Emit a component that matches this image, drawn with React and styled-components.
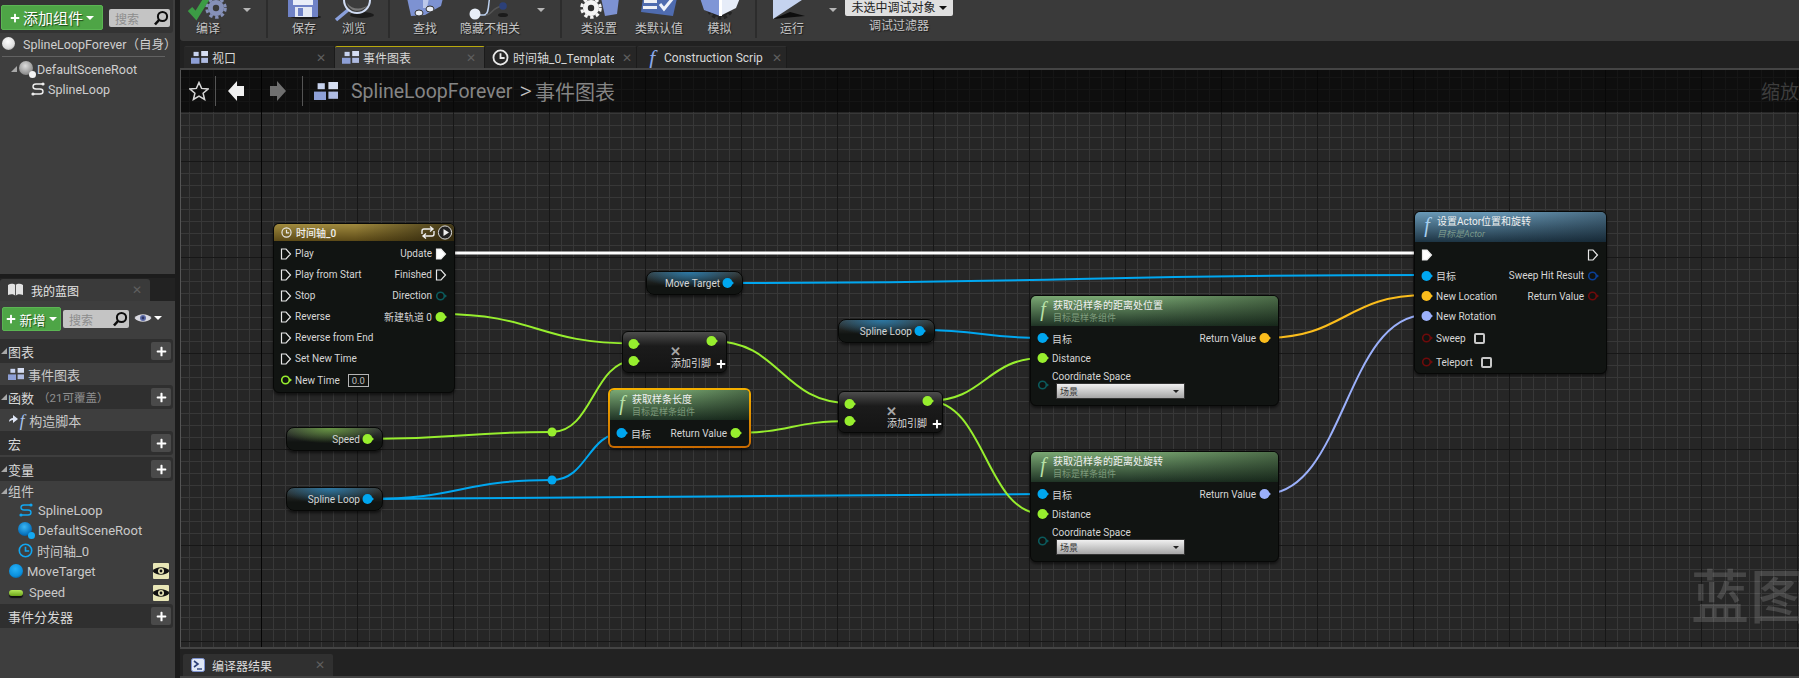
import React from 'react'
import styled, { createGlobalStyle } from 'styled-components'
import { FaPlus } from 'react-icons/fa'

const CANVAS_X = 181
const CANVAS_Y = 70

const GREEN = '#97ee2e'
const BLUE = '#00a7f0'
const YELLOW = '#fbbd1c'
const PURPLE = '#9bb0fb'
const TEAL = '#0b5a5c'
const RED = '#6e0b0b'
const NAVY = '#0a3f96'

const GlobalStyle = createGlobalStyle`
  html, body {
    margin: 0;
    padding: 0;
    background: #1c1c1c;
    overflow: hidden;
  }
  * {
    box-sizing: border-box;
  }
  body {
    font-family: Roboto, 'Noto Sans CJK SC', sans-serif;
  }
`

const Page = styled.div`
  width: 1799px;
  height: 678px;
  display: flex;
  overflow: hidden;
  background: #1c1c1c;
  color: #d0d0d0;
`

const LeftColumn = styled.div`
  width: 175px;
  flex: none;
  display: flex;
  flex-direction: column;
`

const RightColumn = styled.div`
  margin-left: 5px;
  flex: 1;
  min-width: 0;
  display: flex;
  flex-direction: column;
`

const Glyph = styled.svg`
  flex: none;
  display: block;
  margin-left: ${(p) => (p.$push ? 'auto' : '0')};
  transform: ${(p) => (p.$flip ? 'scaleX(-1)' : 'none')};
`

/* left side */

const ComponentsPanel = styled.div`
  height: 274px;
  background: #3e3e3e;
  margin-bottom: 4px;
`

const PanelHead = styled.div`
  height: 33px;
  background: #333;
  display: flex;
  align-items: flex-start;
  padding: 5px 0 0 1px;
  border-radius: 0 0 3px 0;
  margin-right: 2px;
`

const AddButton = styled.div`
  width: ${(p) => p.$w}px;
  height: ${(p) => p.$h}px;
  background: #4ea546;
  border: 1px solid #5bb553;
  border-radius: 2px;
  color: #fff;
  font-size: ${(p) => p.$size}px;
  display: flex;
  align-items: center;
  justify-content: center;
  gap: 3px;
  flex: none;
  text-shadow: 1px 1px 1px #1d4a19;
`

const Caret = styled.span`
  display: inline-block;
  width: 0;
  height: 0;
  border-left: ${(p) => p.$s || 4}px solid transparent;
  border-right: ${(p) => p.$s || 4}px solid transparent;
  border-top: ${(p) => p.$s || 4}px solid ${(p) => p.$c || '#fff'};
  flex: none;
`

const SearchBox = styled.div`
  height: 18px;
  width: ${(p) => p.$w}px;
  margin: ${(p) => p.$m};
  background: #c4c4c4;
  border-radius: 2px;
  color: #8d8d8d;
  font-size: 12px;
  display: flex;
  align-items: center;
  justify-content: space-between;
  padding: 0 1px 0 6px;
  flex: none;
`

const SelfRow = styled.div`
  height: 20px;
  margin: 0 10px 3px 2px;
  display: flex;
  align-items: center;
  gap: 8px;
  font-size: 12.5px;
  color: #cfcfcf;
  white-space: nowrap;
`

const Divider = styled.div`
  height: 1px;
  background: #626262;
  margin: 0 10px 2px 2px;
`

const TreeRow = styled.div`
  height: 20px;
  display: flex;
  align-items: center;
  padding-left: ${(p) => p.$indent}px;
  gap: ${(p) => p.$gap ?? 3}px;
  font-size: 12.5px;
  color: #cfcfcf;
  white-space: nowrap;
`

const Ball = styled.span`
  width: ${(p) => p.$d}px;
  height: ${(p) => p.$d}px;
  border-radius: 50%;
  flex: none;
  background: radial-gradient(circle at 45% 35%, ${(p) => p.$light} 0%, ${(p) => p.$mid} 60%, ${(p) => p.$dark} 100%);
`

const SmallBallWrap = styled.span`
  position: relative;
  width: 16px;
  height: 16px;
  flex: none;
  display: flex;
`

const BallBadge = styled.span`
  position: absolute;
  right: -1px;
  bottom: -1px;
  width: 7px;
  height: 7px;
  border-radius: 50%;
  background: ${(p) => p.$c};
`

const ExpandMark = styled.span`
  width: 0;
  height: 0;
  border-left: 6px solid transparent;
  border-bottom: 6px solid #a8a8a8;
  flex: none;
`

const BlueprintPanel = styled.div`
  flex: 1;
  display: flex;
  flex-direction: column;
`

const PanelTabStrip = styled.div`
  height: 23px;
  background: #222;
  flex: none;
  padding-top: 1px;
`

const PanelTab = styled.div`
  width: 150px;
  height: 22px;
  background: #3a3a3a;
  border-radius: 3px 3px 0 0;
  display: flex;
  align-items: center;
  padding-left: 7px;
  font-size: 12px;
  color: #e4e4e4;
  gap: 7px;
`

const CloseMark = styled.span`
  margin-left: auto;
  margin-right: ${(p) => p.$r || 8}px;
  color: #5f5f5f;
  font-size: 12px;
  line-height: 1;
`

const BlueprintBody = styled.div`
  flex: 1;
  background: #3e3e3e;
  padding-right: 2px;
`

const BlueprintTools = styled.div`
  height: 38px;
  padding: 6px 0 0 2px;
  display: flex;
  align-items: flex-start;
`

const EyeMenu = styled.div`
  display: flex;
  align-items: center;
  gap: 2px;
  margin: 6px 0 0 5px;
`

const Section = styled.div`
  height: 24px;
  background: #2f2f2f;
  border-radius: 0 3px 3px 0;
  margin-top: ${(p) => p.$mt || 0}px;
  display: flex;
  align-items: center;
  font-size: 13px;
  color: #d8d8d8;
  padding-left: ${(p) => (p.$flat ? 8 : 1)}px;
  gap: 1px;
`

const SectionNote = styled.span`
  color: #8f8f8f;
  font-size: 11.5px;
  margin-left: 3px;
  white-space: nowrap;
`

const PlusButton = styled.span`
  margin-left: auto;
  margin-right: 2px;
  width: 20px;
  height: 18px;
  background: #4a4a4a;
  border-radius: 2px;
  display: flex;
  align-items: center;
  justify-content: center;
  color: #fff;
  font-size: 11px;
`

const BlueprintRow = styled.div`
  height: ${(p) => p.$h || 22}px;
  display: flex;
  align-items: center;
  padding-left: ${(p) => p.$indent ?? 8}px;
  gap: ${(p) => p.$gap ?? 3}px;
  font-size: 13px;
  color: #c9c9c9;
  white-space: nowrap;
`

const EyeChip = styled.span`
  margin-left: auto;
  margin-right: 4px;
  width: 16px;
  height: 16px;
  background: #e8e6b6;
  border-radius: 1px;
  display: flex;
  align-items: center;
  justify-content: center;
`

const VarBar = styled.span`
  width: 14px;
  height: 6px;
  border-radius: 3px;
  background: linear-gradient(#b4e85a, #6da51a);
  box-shadow: 0 2px 1px #111;
  flex: none;
  margin-right: 1px;
`

/* toolbar */

const Toolbar = styled.div`
  height: 41px;
  flex: none;
  background: #3a3a3a;
  display: flex;
  border-radius: 0 0 0 3px;
`

const ToolGroup = styled.div`
  width: ${(p) => p.$w}px;
  padding-left: ${(p) => p.$pad || 0}px;
  display: flex;
  flex: none;
  height: 38px;
  border-right: ${(p) => (p.$end ? 'none' : '2px solid #2c2c2c')};
`

const ToolButton = styled.div`
  width: ${(p) => p.$w}px;
  flex: none;
  display: flex;
  flex-direction: column;
  align-items: center;
`

const ToolIconBox = styled.svg`
  width: 44px;
  height: 22px;
  flex: none;
  display: block;
`

const ToolLabel = styled.div`
  font-size: 12px;
  line-height: 14px;
  color: #c6c6c6;
  white-space: nowrap;
  text-shadow: 1px 1px 1px #1c1c1c;
`

const ToolArrow = styled.div`
  width: 22px;
  flex: none;
  display: flex;
  justify-content: center;
  padding-top: 8px;
`

const DebugColumn = styled.div`
  width: 108px;
  flex: none;
  margin-left: 1px;
  display: flex;
  flex-direction: column;
  align-items: center;
`

const DebugCombo = styled.div`
  width: 108px;
  height: 16px;
  background: #dfdfdf;
  border-radius: 0 0 2px 2px;
  color: #222;
  font-size: 12px;
  line-height: 14px;
  display: flex;
  align-items: center;
  justify-content: center;
  gap: 3px;
  margin-bottom: 3px;
`

/* tabs */

const TabStrip = styled.div`
  height: 29px;
  flex: none;
  padding: 5px 0 0 4px;
  display: flex;
  background: #212121;
  border-bottom: 2px solid #444;
`

const Tab = styled.div`
  width: ${(p) => p.$w}px;
  height: 22px;
  flex: none;
  display: flex;
  align-items: center;
  gap: 4px;
  padding-left: 7px;
  font-size: 12px;
  color: #d8d8d8;
  white-space: nowrap;
  overflow: hidden;
  background: ${(p) => (p.$active ? '#3a3a3a' : '#262626')};
  border-top: 1px solid ${(p) => (p.$active ? '#b8a80e' : '#2f2f2f')};
  border-right: 1px solid #1b1b1b;
  border-radius: 2px 2px 0 0;
`

const TabText = styled.span`
  overflow: hidden;
  width: ${(p) => p.$w}px;
  flex: none;
`

const FnGlyph = styled.span`
  font-family: 'Liberation Serif', serif;
  font-style: italic;
  font-size: ${(p) => p.$size || 18}px;
  line-height: 1;
  color: ${(p) => p.$c};
  flex: none;
  width: ${(p) => p.$w || 14}px;
  text-align: center;
`

/* graph */

const Canvas = styled.div`
  flex: 1;
  min-height: 0;
  position: relative;
  overflow: hidden;
  border-left: 1px solid #555;
  background-color: #262626;
  background-image:
    linear-gradient(#050505, #050505),
    linear-gradient(90deg, #171717 1px, transparent 1px),
    linear-gradient(#171717 1px, transparent 1px),
    linear-gradient(90deg, #383838 1px, transparent 1px),
    linear-gradient(#383838 1px, transparent 1px);
  background-size: 1px 100%, 96px 96px, 96px 96px, 12px 12px, 12px 12px;
  background-position: 80px 0, 80px 91px, 80px 91px, 8px 7px, 8px 7px;
  background-repeat: no-repeat, repeat, repeat, repeat, repeat;
`

const TitleBar = styled.div`
  position: absolute;
  left: 0;
  right: 0;
  top: 0;
  height: 42px;
  background: rgba(0, 0, 0, 0.62);
  display: flex;
  align-items: center;
  padding-left: 8px;
  z-index: 3;
`

const TitleRule = styled.span`
  width: 1px;
  height: 30px;
  background: #555;
  margin: ${(p) => p.$m};
  flex: none;
`

const NavSlot = styled.span`
  display: flex;
  margin-right: ${(p) => p.$mr}px;
  flex: none;
`

const TitleText = styled.span`
  font-size: ${(p) => p.$size}px;
  margin-left: ${(p) => p.$ml || 0}px;
  color: #858585;
  white-space: nowrap;
`

const TitleChevron = styled.span`
  font-size: 24px;
  font-weight: 300;
  line-height: 24px;
  color: #c4c4c4;
  margin: 0 3px 0 7px;
`

const ZoomText = styled.span`
  position: absolute;
  left: 1580px;
  top: 7px;
  font-size: 19px;
  color: #3d3d3d;
  white-space: nowrap;
`

const Watermark = styled.div`
  position: absolute;
  left: ${1691 - CANVAS_X}px;
  top: ${556 - CANVAS_Y}px;
  font-size: 58px;
  line-height: 84px;
  font-weight: 500;
  color: rgba(255, 255, 255, 0.15);
  white-space: nowrap;
  letter-spacing: 1px;
`

const WireLayer = styled.svg`
  position: absolute;
  left: 0;
  top: 0;
  width: 1618px;
  height: 577px;
  z-index: 1;
`

const Node = styled.div`
  position: absolute;
  z-index: 2;
  left: ${(p) => p.$x - CANVAS_X}px;
  top: ${(p) => p.$y - CANVAS_Y}px;
  width: ${(p) => p.$w}px;
  height: ${(p) => p.$h}px;
  background: #111412;
  border-radius: 6px;
  border: 1px solid #070807;
  box-shadow: 0 2px 3px rgba(0, 0, 0, 0.55);
  overflow: hidden;
  font-size: 10px;
  color: #d6d6d6;
`

const SelectedNode = styled(Node)`
  border: 2px solid transparent;
  background: linear-gradient(#111412, #111412) padding-box, linear-gradient(#f5b000, #c96a00) border-box;
`

const NodeHeader = styled.div`
  height: ${(p) => p.$h || 30}px;
  padding: 3px 0 0 7px;
  display: flex;
  gap: 5px;
  background: ${(p) =>
    p.$tone === 'blue'
      ? 'linear-gradient(90deg, transparent 40%, rgba(10,20,30,.35)), linear-gradient(#6a9ab8, #1d3443)'
      : 'linear-gradient(90deg, transparent 40%, rgba(10,20,10,.4)), linear-gradient(#7aa873, #1f3325)'};
`

const TitleColumn = styled.div`
  display: flex;
  flex-direction: column;
  min-width: 0;
`

const NodeTitle = styled.div`
  font-size: 10px;
  line-height: 13px;
  color: #f0f0f0;
  white-space: nowrap;
`

const NodeSubtitle = styled.div`
  font-size: 9px;
  line-height: 13px;
  color: rgba(170, 200, 165, 0.62);
  white-space: nowrap;
  font-style: ${(p) => (p.$italic ? 'italic' : 'normal')};
`

const TimelineHeader = styled.div`
  height: 17px;
  background: linear-gradient(90deg, transparent 45%, rgba(30, 25, 10, 0.7)), linear-gradient(#a08a3e, #5c4a17);
  display: flex;
  align-items: center;
  padding: 0 1px 0 7px;
  gap: 4px;
  font-size: 10px;
  font-weight: 500;
  color: #f0f0f0;
`

const NodeBody = styled.div`
  padding: ${(p) => p.$pad || '2px 0 0 0'};
`

const PinRow = styled.div`
  height: ${(p) => p.$h || 20}px;
  display: flex;
  align-items: center;
  justify-content: space-between;
  padding: 0 ${(p) => p.$pr ?? 7}px 0 ${(p) => p.$pl ?? 6}px;
  white-space: nowrap;
`

const PinCell = styled.span`
  display: flex;
  align-items: center;
  gap: ${(p) => p.$gap ?? 3}px;
`

const LiteralBox = styled.span`
  border: 1px solid #b5b5b5;
  padding: 0 3px;
  height: 13px;
  line-height: 11px;
  margin-left: 5px;
  font-size: 9.5px;
  color: #bbb;
`

const CheckBox = styled.span`
  width: 11px;
  height: 11px;
  border: 2px solid #c8c8c8;
  border-radius: 2px;
  margin-left: 5px;
`

const EnumRow = styled.div`
  display: flex;
  align-items: center;
  padding-left: 6px;
  gap: 3px;
  margin-top: 3px;
`

const EnumBlock = styled.div`
  display: flex;
  flex-direction: column;
`

const EnumLabel = styled.div`
  line-height: 12px;
`

const EnumCombo = styled.div`
  width: 129px;
  height: 16px;
  margin-left: 4px;
  background: linear-gradient(#f0f0f0, #a6a6a6);
  border: 1px solid #333;
  color: #333;
  font-size: 9px;
  display: flex;
  align-items: center;
  justify-content: space-between;
  padding: 0 5px 0 3px;
`

const VarPill = styled(Node)`
  border-radius: 8px;
  display: flex;
  align-items: center;
  justify-content: flex-end;
  gap: 2px;
  padding-right: 8px;
  background: ${(p) =>
    `radial-gradient(ellipse 55% 70% at 45% 0%, ${p.$glow}, transparent), linear-gradient(#3a3d3c, #111412 65%)`};
`

const AddNodeBox = styled(Node)`
  background: linear-gradient(#4d4d4d, #1b1b1b 35%, #141414);
  display: flex;
  font-size: 10px;
  overflow: visible;
`

const AddPins = styled.div`
  width: 24px;
  flex: none;
  display: flex;
  flex-direction: column;
  padding: 6px 0 0 5px;
  gap: 5px;
`

const AddMiddle = styled.div`
  width: 57px;
  flex: none;
  padding-top: 13px;
  color: #c8c8c8;
`

const AddCross = styled.div`
  font-size: 13px;
  font-weight: bold;
  line-height: 13px;
  color: #a5a5a5;
  text-align: center;
`

const AddLabel = styled.div`
  display: flex;
  width: 60px;
  align-items: center;
  gap: 5px;
  white-space: nowrap;
  margin-left: 24px;
  line-height: 12px;
  color: #d8d8d8;

  svg {
    flex: none;
  }
`

const AddOut = styled.div`
  flex: none;
  padding: 3px 0 0 2px;
`

/* bottom */

const BottomStrip = styled.div`
  height: 31px;
  flex: none;
  background: #222;
  border-top: 2px solid #444;
  border-bottom: 2px solid #444;
  padding: 5px 0 0 3px;
`

const BottomTab = styled.div`
  width: 150px;
  height: 22px;
  background: #303030;
  border-radius: 2px 2px 0 0;
  display: flex;
  align-items: center;
  padding-left: 8px;
  gap: 7px;
  font-size: 12px;
  color: #dcdcdc;
`

/* drawings */

function Wire({ from, to, color, width = 2, bend }) {
  const dx = Math.abs(to[0] - from[0])
  const d = bend ?? dx * 0.5
  return (
    <path
      d={`M${from[0]} ${from[1]} C${from[0] + d} ${from[1]}, ${to[0] - d} ${to[1]}, ${to[0]} ${to[1]}`}
      fill="none"
      stroke={color}
      strokeWidth={width}
    />
  )
}

function Pin({ kind = 'data', color = '#fff' }) {
  if (kind === 'exec' || kind === 'execOn') {
    return (
      <Glyph width="12" height="12" viewBox="0 0 12 12">
        <path
          d="M1.5 1 H6 L10.5 6 L6 11 H1.5 Z"
          fill={kind === 'execOn' ? '#fff' : 'none'}
          stroke="#e8e8e8"
          strokeWidth="1.2"
        />
      </Glyph>
    )
  }
  return (
    <Glyph width="12" height="12" viewBox="0 0 12 12">
      <path d="M9.5 4 L12 6 L9.5 8 Z" fill={color} />
      <circle
        cx="5.5"
        cy="6"
        r={kind === 'hollow' ? 3.8 : 5}
        fill={kind === 'hollow' ? '#101210' : color}
        stroke={kind === 'hollow' ? color : 'none'}
        strokeWidth="1.6"
      />
    </Glyph>
  )
}

function GraphIcon({ size = 20 }) {
  return (
    <Glyph width={size} height={size * 0.75} viewBox="0 0 20 15">
      <rect x="0" y="8" width="10" height="7" fill="#8d9fd6" />
      <rect x="3" y="1" width="6" height="5" fill="#c7d2ee" />
      <rect x="12" y="0" width="8" height="6" fill="#d6def2" />
      <rect x="12" y="8" width="8" height="6" fill="#aebbe2" />
    </Glyph>
  )
}

function ClockIcon({ size = 14, color = '#e8e8e8' }) {
  return (
    <Glyph width={size} height={size} viewBox="0 0 14 14">
      <circle cx="7" cy="7" r="5.8" fill="none" stroke={color} strokeWidth="1.5" />
      <path d="M7 3.5 V7.4 H10.4" fill="none" stroke={color} strokeWidth="1.5" />
    </Glyph>
  )
}

function SplineIcon({ color = '#eee', size = 14 }) {
  return (
    <Glyph width={size} height={size} viewBox="0 0 14 14">
      <path d="M12 2 H5 C1 2 1 7 5 7 H9 C13 7 13 12 9 12 H2" fill="none" stroke={color} strokeWidth="1.4" />
      <circle cx="12" cy="2" r="1.6" fill={color} />
      <circle cx="2" cy="12" r="1.6" fill={color} />
    </Glyph>
  )
}

function SearchGlyph() {
  return (
    <Glyph width="16" height="16" viewBox="0 0 16 16">
      <circle cx="9.5" cy="6.5" r="4.6" fill="none" stroke="#0c0c0c" strokeWidth="2" />
      <path d="M6 10 L2 14.5" stroke="#0c0c0c" strokeWidth="2.6" />
    </Glyph>
  )
}

function EyeGlyph({ light }) {
  return (
    <Glyph width="18" height="10" viewBox="0 0 18 10">
      <path d="M0.5 5 C4 0 14 0 17.5 5 C14 10 4 10 0.5 5 Z" fill={light ? '#d8d8e0' : '#111'} />
      <circle cx="9" cy="5" r="3" fill={light ? '#5d6ba8' : '#e8e6b6'} />
      <circle cx="9" cy="5" r="1.4" fill={light ? '#2c3563' : '#111'} />
    </Glyph>
  )
}

function BookIcon() {
  return (
    <Glyph width="17" height="14" viewBox="0 0 17 14">
      <path d="M1 12 V2 C4 0 7 1 8.5 2 C10 1 13 0 16 2 V12 C13 11 10 11 8.5 13 C7 11 4 11 1 12 Z" fill="#e2e2e2" />
      <path d="M8.5 2 V13" stroke="#555" strokeWidth="1" />
    </Glyph>
  )
}

function ConstructArrow() {
  return (
    <Glyph width="10" height="12" viewBox="0 0 10 12">
      <path d="M1 8 C1 5 3 4 5 4 V1 L10 5 L5 9 V6 C3 6 2 7 1 8 Z" fill="#dfe6f6" />
    </Glyph>
  )
}

function GearShape({ cx, cy, r, fill, hole }) {
  return (
    <g>
      <circle cx={cx} cy={cy} r={r + 1.3} fill="none" stroke={fill} strokeWidth="3" strokeDasharray="3.4 2.6" />
      <circle cx={cx} cy={cy} r={r} fill={fill} />
      <circle cx={cx} cy={cy} r={r * 0.4} fill={hole} />
    </g>
  )
}

function CompileIcon() {
  return (
    <ToolIconBox viewBox="0 0 44 22">
      <GearShape cx={30} cy={8} r={8} fill="#8590b8" hole="#3a3a3a" />
      <path d="M4 9 L10 15.5 L21 -2" fill="none" stroke="#3c9c45" strokeWidth="6" />
    </ToolIconBox>
  )
}

function SaveIcon() {
  return (
    <ToolIconBox viewBox="0 0 44 22">
      <ellipse cx="24" cy="17" rx="15" ry="2" fill="#1b1b1b" />
      <path d="M6 -2 H36 V17 H6 Z" fill="#6f82c6" />
      <path d="M11 -2 H31 V5 H11 Z" fill="#e8edf8" />
      <path d="M13 7 H30 V17 H13 Z" fill="#e3e8f4" />
      <path d="M16 8 H21 V16 H16 Z" fill="#6f82c6" />
    </ToolIconBox>
  )
}

function BrowseIcon() {
  return (
    <ToolIconBox viewBox="0 0 44 22">
      <ellipse cx="30" cy="15" rx="12" ry="3" fill="#1b1b1b" />
      <path d="M16 10 L4 20" stroke="#8aa0dc" strokeWidth="3.5" />
      <circle cx="25" cy="0" r="13" fill="#3c3c3c" stroke="#d0dcf4" strokeWidth="2" />
      <path d="M15 3 C20 10 30 10 36 5 C30 13 18 13 15 3 Z" fill="#777" />
    </ToolIconBox>
  )
}

function FindIcon() {
  return (
    <ToolIconBox viewBox="0 0 44 22">
      <path d="M4 -2 H40 L38 6 L22 15 L8 16 Z" fill="#7d92d2" />
      <path d="M20 -2 H26 L24 8 H20 Z" fill="#bcc8ea" />
      <ellipse cx="16" cy="13" rx="4" ry="3" fill="#e8ecf5" stroke="#333" />
      <ellipse cx="27" cy="9" rx="4" ry="3" fill="#e8ecf5" stroke="#333" />
    </ToolIconBox>
  )
}

function HideIcon() {
  return (
    <ToolIconBox viewBox="0 0 44 22">
      <ellipse cx="35" cy="15" rx="5" ry="2" fill="#1b1b1b" />
      <path d="M11 15 H16 C22 15 20 0 22 -2" fill="none" stroke="#bcd0ee" strokeWidth="1.5" />
      <path d="M18 15 C24 15 24 7 35 6" fill="none" stroke="#555" strokeWidth="1.5" />
      <circle cx="7" cy="14" r="5.5" fill="#e8eef8" />
      <circle cx="35" cy="6" r="3.8" fill="#2c4078" />
    </ToolIconBox>
  )
}

function ClassIcon() {
  return (
    <ToolIconBox viewBox="0 0 44 22">
      <path d="M24 -2 H42 L40 14 L28 16 Z" fill="#7d92d2" />
      <GearShape cx={14} cy={8} r={8} fill="#f4f4f4" hole="#2d2d2d" />
    </ToolIconBox>
  )
}

function DefaultsIcon() {
  return (
    <ToolIconBox viewBox="0 0 44 22">
      <path d="M6 -2 H40 L36 16 L4 12 Z" fill="#4f6cb0" />
      <path d="M7 0 H20 V3 H7 Z M6 6 H20 V9 H6 Z" fill="#eef0f6" />
      <path d="M23 4 L27 9 L36 -2" fill="none" stroke="#eef2fa" strokeWidth="3" />
    </ToolIconBox>
  )
}

function SimulateIcon() {
  return (
    <ToolIconBox viewBox="0 0 44 22">
      <GearShape cx={22} cy={6} r={11} fill="#242424" hole="#242424" />
      <path d="M2 -2 H22 V16 L6 10 Z" fill="#7f96d6" />
      <path d="M22 -2 H42 L38 8 L22 16 Z" fill="#e6ecf8" />
      <path d="M21 -2 H24 V16 H21 Z" fill="#ffffff" />
    </ToolIconBox>
  )
}

function PlayIcon() {
  return (
    <ToolIconBox viewBox="0 0 44 22">
      <path d="M3 19 L20 12 L35 16 Z" fill="#0d0d0d" />
      <path d="M3 -2 H35 L3 19 Z" fill="#c5d3ef" />
    </ToolIconBox>
  )
}

function Star() {
  return (
    <Glyph width="20" height="20" viewBox="0 0 20 20">
      <path d="M10 1.5 L12.6 7.4 L19 8 L14.1 12.2 L15.6 18.5 L10 15.1 L4.4 18.5 L5.9 12.2 L1 8 L7.4 7.4 Z" fill="none" stroke="#d8d8d8" strokeWidth="1.5" />
    </Glyph>
  )
}

function NavArrow({ flip, color }) {
  return (
    <Glyph width="18" height="22" viewBox="0 0 18 22" $flip={flip}>
      <path d="M1 11 L10 1 V6 H17 V16 H10 V21 Z" fill={color} />
    </Glyph>
  )
}

function TimelineControls() {
  return (
    <Glyph width="33" height="15" viewBox="0 0 33 15" $push>
      <path d="M2 9 V6 Q2 4 4 4 H12 M10 1.5 L13 4 L10 6.5 M14 6 V9 Q14 11 12 11 H4 M6 8.5 L3 11 L6 13.5" fill="none" stroke="#eee" strokeWidth="1.4" />
      <circle cx="25" cy="7.5" r="6.6" fill="#222" stroke="#ddd" strokeWidth="1" />
      <path d="M23.5 4 L29 7.5 L23.5 11 Z" fill="#eee" />
    </Glyph>
  )
}

function CompilerIcon() {
  return (
    <Glyph width="14" height="14" viewBox="0 0 14 14">
      <rect x="0.5" y="0.5" width="13" height="13" rx="2" fill="#dfe7f5" stroke="#7d92d2" />
      <path d="M3 3 L7 6 L3 9" fill="none" stroke="#2c4078" strokeWidth="1.6" />
      <path d="M6 11 H11" stroke="#2c4078" strokeWidth="1.4" />
    </Glyph>
  )
}

function LeftPin({ kind, color, children }) {
  return (
    <PinCell>
      <Pin kind={kind} color={color} />
      {children}
    </PinCell>
  )
}

function RightPin({ kind, color, children }) {
  return (
    <PinCell>
      {children}
      <Pin kind={kind} color={color} />
    </PinCell>
  )
}

function FunctionHeader({ title, subtitle, tone, italic }) {
  return (
    <NodeHeader $tone={tone}>
      <FnGlyph $c={tone === 'blue' ? '#a8d0f0' : '#b8e0a8'} $size={20} $w={10}>
        f
      </FnGlyph>
      <TitleColumn>
        <NodeTitle>{title}</NodeTitle>
        <NodeSubtitle $italic={italic}>{subtitle}</NodeSubtitle>
      </TitleColumn>
    </NodeHeader>
  )
}

function SplineDistanceNode({ y, title, out }) {
  return (
    <Node $x={1030} $y={y} $w={249} $h={111}>
      <FunctionHeader title={title} subtitle="目标是样条组件" />
      <NodeBody>
        <PinRow $h={20}>
          <LeftPin color={BLUE}>目标</LeftPin>
          <RightPin color={out}>Return Value</RightPin>
        </PinRow>
        <PinRow $h={20}>
          <LeftPin color={GREEN}>Distance</LeftPin>
        </PinRow>
        <EnumRow>
          <Pin kind="hollow" color={TEAL} />
          <EnumBlock>
            <EnumLabel>Coordinate Space</EnumLabel>
            <EnumCombo>
              场景
              <Caret $s={3.5} $c="#222" />
            </EnumCombo>
          </EnumBlock>
        </EnumRow>
      </NodeBody>
    </Node>
  )
}

function AddNode({ x, y }) {
  return (
    <AddNodeBox $x={x} $y={y} $w={105} $h={42}>
      <AddPins>
        <Pin color={GREEN} />
        <Pin color={GREEN} />
      </AddPins>
      <AddMiddle>
        <AddCross>✕</AddCross>
        <AddLabel>
          添加引脚
          <FaPlus size={10} color="#fff" />
        </AddLabel>
      </AddMiddle>
      <AddOut>
        <Pin color={GREEN} />
      </AddOut>
    </AddNodeBox>
  )
}

const p = (x, y) => [x, y]

export default function App() {
  return (
    <Page>
      <GlobalStyle />
      <LeftColumn>
        <ComponentsPanel>
          <PanelHead>
            <AddButton $w={102} $h={25} $size={15}>
              <FaPlus size={10} />
              添加组件
              <Caret $s={4} />
            </AddButton>
            <SearchBox $w={61} $m="4px 0 0 6px">
              搜索
              <SearchGlyph />
            </SearchBox>
          </PanelHead>
          <SelfRow>
            <Ball $d={13} $light="#fff" $mid="#ddd" $dark="#777" />
            SplineLoopForever（自身）
          </SelfRow>
          <Divider />
          <TreeRow $indent={11} $gap={2}>
            <ExpandMark />
            <SmallBallWrap>
              <Ball $d={14} $light="#ddd" $mid="#999" $dark="#666" />
              <BallBadge $c="#f4f4f4" />
            </SmallBallWrap>
            DefaultSceneRoot
          </TreeRow>
          <TreeRow $indent={31}>
            <SplineIcon />
            SplineLoop
          </TreeRow>
        </ComponentsPanel>

        <BlueprintPanel>
          <PanelTabStrip>
            <PanelTab>
              <BookIcon />
              我的蓝图
              <CloseMark>✕</CloseMark>
            </PanelTab>
          </PanelTabStrip>
          <BlueprintBody>
            <BlueprintTools>
              <AddButton $w={59} $h={24} $size={13}>
                <FaPlus size={10} />
                新增
                <Caret $s={4} />
              </AddButton>
              <SearchBox $w={66} $m="3px 0 0 2px">
                搜索
                <SearchGlyph />
              </SearchBox>
              <EyeMenu>
                <EyeGlyph light />
                <Caret $s={4} />
              </EyeMenu>
            </BlueprintTools>
            <Section>
              <ExpandMark />
              图表
              <PlusButton><FaPlus /></PlusButton>
            </Section>
            <BlueprintRow $gap={4}>
              <GraphIcon size={16} />
              事件图表
            </BlueprintRow>
            <Section>
              <ExpandMark />
              函数
              <SectionNote>（21可覆盖）</SectionNote>
              <PlusButton><FaPlus /></PlusButton>
            </Section>
            <BlueprintRow $gap={0}>
              <ConstructArrow />
              <FnGlyph $c="#a8c4ee" $size={17} $w={8}>f</FnGlyph>
              &nbsp;构造脚本
            </BlueprintRow>
            <Section $flat>
              宏
              <PlusButton><FaPlus /></PlusButton>
            </Section>
            <Section $mt={2}>
              <ExpandMark />
              变量
              <PlusButton><FaPlus /></PlusButton>
            </Section>
            <BlueprintRow $h={19} $indent={1} $gap={1}>
              <ExpandMark />
              组件
            </BlueprintRow>
            <BlueprintRow $h={20} $indent={19} $gap={5}>
              <SplineIcon color="#12a6f0" />
              SplineLoop
            </BlueprintRow>
            <BlueprintRow $h={20} $indent={18} $gap={4}>
              <SmallBallWrap>
                <Ball $d={14} $light="#3bb6f4" $mid="#0a76c0" $dark="#053a6c" />
                <BallBadge $c="#14a8f2" />
              </SmallBallWrap>
              DefaultSceneRoot
            </BlueprintRow>
            <BlueprintRow $h={20} $indent={18} $gap={4}>
              <ClockIcon size={15} color="#12a6f0" />
              时间轴_0
            </BlueprintRow>
            <BlueprintRow $h={22} $indent={9} $gap={4}>
              <Ball $d={14} $light="#26b2f8" $mid="#0a8fdc" $dark="#053a6c" />
              MoveTarget
              <EyeChip><EyeGlyph /></EyeChip>
            </BlueprintRow>
            <BlueprintRow $h={21} $indent={9} $gap={5}>
              <VarBar />
              Speed
              <EyeChip><EyeGlyph /></EyeChip>
            </BlueprintRow>
            <Section $flat $mt={1}>
              事件分发器
              <PlusButton><FaPlus /></PlusButton>
            </Section>
          </BlueprintBody>
        </BlueprintPanel>
      </LeftColumn>

      <RightColumn>
        <Toolbar>
          <ToolGroup $w={88}>
            <ToolButton $w={56}>
              <CompileIcon />
              <ToolLabel>编译</ToolLabel>
            </ToolButton>
            <ToolArrow><Caret $s={4} $c="#b5b5b5" /></ToolArrow>
          </ToolGroup>
          <ToolGroup $w={122} $pad={11}>
            <ToolButton $w={50}>
              <SaveIcon />
              <ToolLabel>保存</ToolLabel>
            </ToolButton>
            <ToolButton $w={50}>
              <BrowseIcon />
              <ToolLabel>浏览</ToolLabel>
            </ToolButton>
          </ToolGroup>
          <ToolGroup $w={172} $pad={10}>
            <ToolButton $w={50}>
              <FindIcon />
              <ToolLabel>查找</ToolLabel>
            </ToolButton>
            <ToolButton $w={80}>
              <HideIcon />
              <ToolLabel>隐藏不相关</ToolLabel>
            </ToolButton>
            <ToolArrow><Caret $s={4} $c="#b5b5b5" /></ToolArrow>
          </ToolGroup>
          <ToolGroup $w={195} $pad={7}>
            <ToolButton $w={60}>
              <ClassIcon />
              <ToolLabel>类设置</ToolLabel>
            </ToolButton>
            <ToolButton $w={60}>
              <DefaultsIcon />
              <ToolLabel>类默认值</ToolLabel>
            </ToolButton>
            <ToolButton $w={61}>
              <SimulateIcon />
              <ToolLabel>模拟</ToolLabel>
            </ToolButton>
          </ToolGroup>
          <ToolGroup $w={260} $pad={5} $end>
            <ToolButton $w={60}>
              <PlayIcon />
              <ToolLabel>运行</ToolLabel>
            </ToolButton>
            <ToolArrow><Caret $s={4} $c="#b5b5b5" /></ToolArrow>
            <DebugColumn>
              <DebugCombo>
                未选中调试对象
                <Caret $s={4} $c="#111" />
              </DebugCombo>
              <ToolLabel>调试过滤器</ToolLabel>
            </DebugColumn>
          </ToolGroup>
        </Toolbar>

        <TabStrip>
          <Tab $w={151}>
            <GraphIcon size={17} />
            视口
            <CloseMark>✕</CloseMark>
          </Tab>
          <Tab $w={150} $active>
            <GraphIcon size={17} />
            事件图表
            <CloseMark>✕</CloseMark>
          </Tab>
          <Tab $w={152}>
            <ClockIcon size={17} />
            <TabText $w={101}>时间轴_0_Template</TabText>
            <CloseMark $r={4}>✕</CloseMark>
          </Tab>
          <Tab $w={150}>
            <FnGlyph $c="#8aa8ea" $size={22} $w={16}>f</FnGlyph>
            <TabText $w={103}>Construction Scrip</TabText>
            <CloseMark $r={4}>✕</CloseMark>
          </Tab>
        </TabStrip>

        <Canvas>
          <TitleBar>
            <Star />
            <TitleRule $m="0 11px 0 6px" />
            <NavSlot $mr={24}><NavArrow color="#f0f0f0" /></NavSlot>
            <NavSlot $mr={15}><NavArrow flip color="#6f6f6f" /></NavSlot>
            <TitleRule $m="0 11px 0 0" />
            <GraphIcon size={24} />
            <TitleText $size={19.5} $ml={13}>SplineLoopForever</TitleText>
            <TitleChevron>&gt;</TitleChevron>
            <TitleText $size={20}>事件图表</TitleText>
            <ZoomText>缩放</ZoomText>
          </TitleBar>
          <Watermark>蓝图</Watermark>

          <WireLayer viewBox={`${CANVAS_X} ${CANVAS_Y} 1618 577`}>
            <Wire from={p(445, 253)} to={p(1424, 253)} color="#fff" width={3} bend={10} />
            <Wire from={p(729, 283)} to={p(1426, 275)} color={BLUE} />
            <Wire from={p(921, 330)} to={p(1043, 338)} color={BLUE} />
            <Wire from={p(440, 314)} to={p(634, 343.5)} color={GREEN} />
            <Wire from={p(369, 439)} to={p(552, 432)} color={GREEN} />
            <Wire from={p(552, 432)} to={p(634, 361)} color={GREEN} />
            <Wire from={p(369, 499)} to={p(552, 480)} color={BLUE} />
            <Wire from={p(552, 480)} to={p(623, 433)} color={BLUE} />
            <Wire from={p(369, 499)} to={p(1043, 494)} color={BLUE} bend={60} />
            <Wire from={p(733, 433)} to={p(850, 421)} color={GREEN} />
            <Wire from={p(712, 341)} to={p(850, 403)} color={GREEN} />
            <Wire from={p(928, 401)} to={p(1043, 358)} color={GREEN} />
            <Wire from={p(928, 401)} to={p(1043, 514)} color={GREEN} />
            <Wire from={p(1264, 338)} to={p(1426, 295)} color={YELLOW} />
            <Wire from={p(1264, 494)} to={p(1426, 315)} color={PURPLE} />
            <circle cx="552" cy="432" r="4.5" fill={GREEN} />
            <circle cx="552" cy="480" r="4.5" fill={BLUE} />
          </WireLayer>

          <Node $x={273} $y={223} $w={182} $h={170}>
            <TimelineHeader>
              <ClockIcon size={11} />
              时间轴_0
              <TimelineControls />
            </TimelineHeader>
            <NodeBody>
              <PinRow $h={21}>
                <LeftPin kind="exec">Play</LeftPin>
                <RightPin kind="execOn">Update</RightPin>
              </PinRow>
              <PinRow $h={21}>
                <LeftPin kind="exec">Play from Start</LeftPin>
                <RightPin kind="exec">Finished</RightPin>
              </PinRow>
              <PinRow $h={21}>
                <LeftPin kind="exec">Stop</LeftPin>
                <RightPin kind="hollow" color={TEAL}>Direction</RightPin>
              </PinRow>
              <PinRow $h={21}>
                <LeftPin kind="exec">Reverse</LeftPin>
                <RightPin color={GREEN}>新建轨道 0</RightPin>
              </PinRow>
              <PinRow $h={21}>
                <LeftPin kind="exec">Reverse from End</LeftPin>
              </PinRow>
              <PinRow $h={21}>
                <LeftPin kind="exec">Set New Time</LeftPin>
              </PinRow>
              <PinRow $h={22}>
                <LeftPin kind="hollow" color={GREEN}>
                  New Time
                  <LiteralBox>0.0</LiteralBox>
                </LeftPin>
              </PinRow>
            </NodeBody>
          </Node>

          <VarPill $x={646} $y={271} $w={97} $h={24} $glow="rgba(40,140,200,.75)">
            Move Target
            <Pin color={BLUE} />
          </VarPill>
          <VarPill $x={838} $y={319} $w={97} $h={24} $glow="rgba(40,140,200,.75)">
            Spline Loop
            <Pin color={BLUE} />
          </VarPill>
          <VarPill $x={286} $y={427} $w={97} $h={24} $glow="rgba(120,180,70,.75)">
            Speed
            <Pin color={GREEN} />
          </VarPill>
          <VarPill $x={286} $y={487} $w={97} $h={24} $glow="rgba(40,140,200,.75)">
            Spline Loop
            <Pin color={BLUE} />
          </VarPill>

          <AddNode x={622} y={331} />
          <AddNode x={838} y={391} />

          <SelectedNode $x={608} $y={388} $w={143} $h={60}>
            <FunctionHeader title="获取样条长度" subtitle="目标是样条组件" />
            <NodeBody $pad="3px 0 0 0">
              <PinRow $h={20}>
                <LeftPin color={BLUE}>目标</LeftPin>
                <RightPin color={GREEN}>Return Value</RightPin>
              </PinRow>
            </NodeBody>
          </SelectedNode>

          <SplineDistanceNode y={295} title="获取沿样条的距离处位置" out={YELLOW} />
          <SplineDistanceNode y={451} title="获取沿样条的距离处旋转" out={PURPLE} />

          <Node $x={1414} $y={211} $w={193} $h={163}>
            <FunctionHeader title="设置Actor位置和旋转" subtitle="目标是Actor" tone="blue" italic />
            <NodeBody>
              <PinRow $h={21} $pl={6} $pr={7}>
                <LeftPin kind="execOn" />
                <RightPin kind="exec" />
              </PinRow>
              <PinRow $h={21}>
                <LeftPin color={BLUE}>目标</LeftPin>
                <RightPin kind="hollow" color={NAVY}>Sweep Hit Result</RightPin>
              </PinRow>
              <PinRow $h={20}>
                <LeftPin color={YELLOW}>New Location</LeftPin>
                <RightPin kind="hollow" color={RED}>Return Value</RightPin>
              </PinRow>
              <PinRow $h={20}>
                <LeftPin color={PURPLE}>New Rotation</LeftPin>
              </PinRow>
              <PinRow $h={24}>
                <LeftPin kind="hollow" color={RED}>
                  Sweep
                  <CheckBox />
                </LeftPin>
              </PinRow>
              <PinRow $h={24}>
                <LeftPin kind="hollow" color={RED}>
                  Teleport
                  <CheckBox />
                </LeftPin>
              </PinRow>
            </NodeBody>
          </Node>
        </Canvas>

        <BottomStrip>
          <BottomTab>
            <CompilerIcon />
            编译器结果
            <CloseMark>✕</CloseMark>
          </BottomTab>
        </BottomStrip>
      </RightColumn>
    </Page>
  )
}
